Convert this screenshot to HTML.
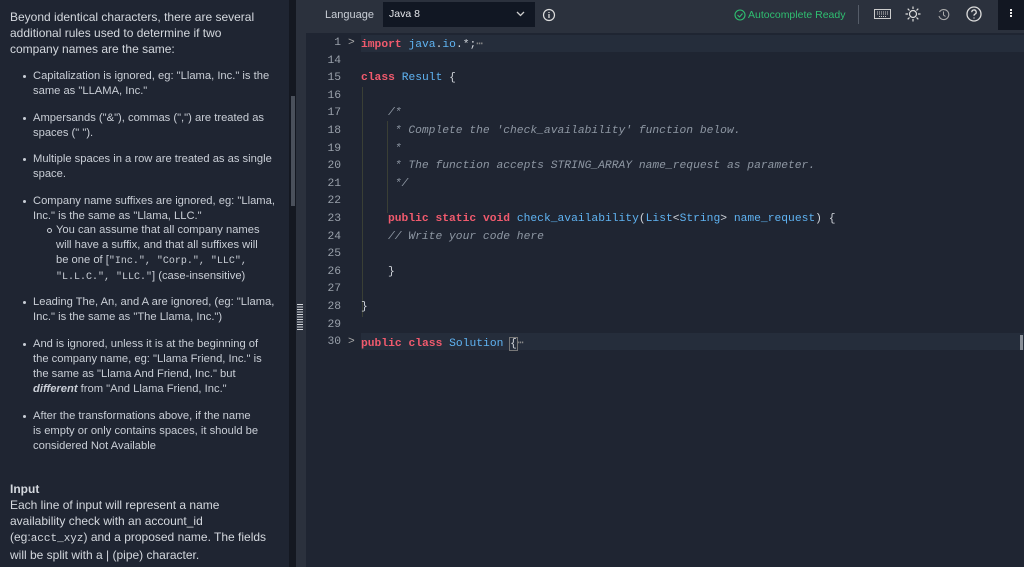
<!DOCTYPE html>
<html><head><meta charset="utf-8"><style>
*{margin:0;padding:0;box-sizing:border-box}
body{width:1024px;height:567px;overflow:hidden;background:#1e2531;font-family:"Liberation Sans",sans-serif;position:relative}
#left{position:absolute;left:0;top:0;width:289px;height:567px;background:#1f2532;color:#c9ced6;font-size:11.2px;overflow:hidden}
#left .p{position:absolute;left:10px;width:280px;font-size:12px;line-height:16px;color:#d4d8de;white-space:nowrap}
.li{position:absolute;left:33px;width:250px;line-height:15px;white-space:nowrap}
.li:before{content:"";position:absolute;left:-10px;top:6px;width:3px;height:3px;border-radius:50%;background:#c9ced6}
.sub{position:absolute;left:56px;width:225px;line-height:15px;white-space:nowrap}
.sub:before{content:"";position:absolute;left:-9px;top:5px;width:3px;height:3px;border-radius:50%;border:1px solid #c9ced6}
code{font-family:"Liberation Mono",monospace;font-size:10px}
#sb{position:absolute;left:289px;top:0;width:7px;height:567px;background:#141821}
#thumb{position:absolute;left:291px;top:96px;width:4px;height:110px;background:#4a505b}
#div{position:absolute;left:296px;top:0;width:10px;height:567px;background:#2b313d}
#grip{position:absolute;left:297px;top:304px;width:6px;height:26px;background:repeating-linear-gradient(#d6d9de 0 1px,transparent 1px 2.5px)}
#top{position:absolute;left:306px;top:0;width:718px;height:33px;background:#2b313d;color:#c9ced6;font-size:11px}
#sel{position:absolute;left:77px;top:2px;width:152px;height:25px;background:#111723;color:#e5e7eb;font-size:10.5px;line-height:25px;padding-left:6px}
#ed{position:absolute;left:306px;top:33px;width:718px;height:534px;background:#1f2532;font-family:"Liberation Mono",monospace;font-size:11.3px;color:#d0d4da}
.ln{position:absolute;left:0;width:35px;text-align:right;color:#9aa1ab}
.c{position:absolute;left:55px;white-space:pre}
.k{color:#f05a6d;font-weight:bold}.b{color:#5fb3f2}.cm{color:#8e97a3;font-style:italic}
.hl{position:absolute;left:55px;width:663px;height:17px;background:#252d3b}
</style></head><body>
<div id="left">
<div class="p" style="top:9px">Beyond identical characters, there are several<br>additional rules used to determine if two<br>company names are the same:</div>
<div class="li" style="top:69px">Capitalization is ignored, eg: "Llama, Inc." is the<br>same as "LLAMA, Inc."</div>
<div class="li" style="top:111px">Ampersands ("&amp;"), commas (",") are treated as<br>spaces (" ").</div>
<div class="li" style="top:152px">Multiple spaces in a row are treated as as single<br>space.</div>
<div class="li" style="top:194px">Company name suffixes are ignored, eg: "Llama,<br>Inc." is the same as "Llama, LLC."</div>
<div class="sub" style="top:223px">You can assume that all company names<br>will have a suffix, and that all suffixes will<br>be one of [<code>"Inc.", "Corp.", "LLC",</code><br><code>"L.L.C.", "LLC."</code>] (case-insensitive)</div>
<div class="li" style="top:295px">Leading The, An, and A are ignored, (eg: "Llama,<br>Inc." is the same as "The Llama, Inc.")</div>
<div class="li" style="top:337px">And is ignored, unless it is at the beginning of<br>the company name, eg: "Llama Friend, Inc." is<br>the same as "Llama And Friend, Inc." but<br><b><i>different</i></b> from "And Llama Friend, Inc."</div>
<div class="li" style="top:409px">After the transformations above, if the name<br>is empty or only contains spaces, it should be<br>considered Not Available</div>
<div class="p" style="top:481px"><b>Input</b><br>Each line of input will represent a name<br>availability check with an account_id<br>(eg:<code style="font-size:11px">acct_xyz</code>) and a proposed name. The fields<br>will be split with a | (pipe) character.</div>
</div>
<div id="sb"></div><div id="thumb"></div><div id="div"></div><div id="grip"></div>
<div id="top">
<span style="position:absolute;left:19px;top:9px">Language</span>
<div id="sel">Java 8<svg style="position:absolute;right:10px;top:9px" width="9" height="6"><path d="M1 1l3.5 3.5L8 1" stroke="#ccc" fill="none" stroke-width="1.3"/></svg></div>
<svg style="position:absolute;left:236px;top:8px" width="14" height="14"><circle cx="7" cy="7" r="5.5" stroke="#ddd" fill="none" stroke-width="1.2"/><path d="M7 6v4M7 4v1" stroke="#ddd" stroke-width="1.3"/></svg>
<svg style="position:absolute;left:428px;top:9px" width="12" height="12"><circle cx="6" cy="6" r="5" stroke="#2fbf71" fill="none" stroke-width="1.1"/><path d="M3.5 6l2 2 3-3.5" stroke="#2fbf71" fill="none" stroke-width="1.1"/></svg>
<span style="position:absolute;left:442px;top:9px;color:#2fbf71;font-size:10.5px">Autocomplete Ready</span>
<div style="position:absolute;left:552px;top:5px;width:1px;height:19px;background:#555c68"></div>
<svg style="position:absolute;left:568px;top:8px" width="18" height="12"><rect x="0.5" y="1.5" width="16" height="9" fill="none" stroke="#ccc"/><path d="M3 4h11M3 6h11M5 8.5h7" stroke="#ccc" stroke-dasharray="1 1"/></svg>
<svg style="position:absolute;left:599px;top:6px" width="16" height="16"><circle cx="8" cy="8" r="3.5" stroke="#ddd" fill="none" stroke-width="1.2"/><path d="M8 0.5v2.5M8 13v2.5M0.5 8h2.5M13 8h2.5M2.7 2.7l1.8 1.8M11.5 11.5l1.8 1.8M2.7 13.3l1.8-1.8M11.5 4.5l1.8-1.8" stroke="#ddd" stroke-width="1.2"/></svg>
<svg style="position:absolute;left:631px;top:8px" width="13" height="13"><path d="M2.5 4A5 5 0 1 1 2 8" stroke="#aaa" fill="none" stroke-width="1.1"/><path d="M6.5 3.5v3.5l2 1.5" stroke="#aaa" fill="none"/></svg>
<svg style="position:absolute;left:660px;top:6px" width="16" height="16"><circle cx="8" cy="8" r="7" stroke="#ddd" fill="none" stroke-width="1.3"/><path d="M5.8 6.2a2.2 2.2 0 1 1 3 2c-.7.3-.8.7-.8 1.5M8 11.5v1" stroke="#ddd" fill="none" stroke-width="1.3"/></svg>
<div style="position:absolute;left:692px;top:0;width:26px;height:30px;background:#121722"><div style="position:absolute;left:12px;top:9px;width:2px;height:2px;background:#eee;box-shadow:0 3px #eee,0 6px #eee"></div></div>
</div>
<div id="ed">
<div class="hl" style="top:2px"></div><div class="hl" style="top:300px"></div>
<div style="position:absolute;left:56px;top:54px;width:1px;height:230px;background:#3a3f35"></div>
<div style="position:absolute;left:81px;top:88px;width:1px;height:92px;background:#3a3f35"></div>
<div style="position:absolute;left:714px;top:302px;width:3px;height:15px;background:#8a9099"></div>
<div class="ln" style="top:4px">1</div><div class="c" style="left:42px;top:4px;color:#aaa">&gt;</div><div class="c" style="top:4px"><span class="k">import</span> <span class="b">java</span>.<span class="b">io</span>.*;<span style="color:#888">⋯</span></div>
<div class="ln" style="top:22px">14</div>
<div class="ln" style="top:39px">15</div><div class="c" style="top:39px"><span class="k">class</span> <span class="b">Result</span> {</div>
<div class="ln" style="top:57px">16</div>
<div class="ln" style="top:74px">17</div><div class="c cm" style="left:82px;top:74px">/*</div>
<div class="ln" style="top:92px">18</div><div class="c cm" style="left:82px;top:92px"> * Complete the 'check_availability' function below.</div>
<div class="ln" style="top:110px">19</div><div class="c cm" style="left:82px;top:110px"> *</div>
<div class="ln" style="top:127px">20</div><div class="c cm" style="left:82px;top:127px"> * The function accepts STRING_ARRAY name_request as parameter.</div>
<div class="ln" style="top:145px">21</div><div class="c cm" style="left:82px;top:145px"> */</div>
<div class="ln" style="top:162px">22</div>
<div class="ln" style="top:180px">23</div><div class="c" style="left:82px;top:180px"><span class="k">public</span> <span class="k">static</span> <span class="k">void</span> <span class="b">check_availability</span>(<span class="b">List</span>&lt;<span class="b">String</span>&gt; <span class="b">name_request</span>) {</div>
<div class="ln" style="top:198px">24</div><div class="c cm" style="left:82px;top:198px">// Write your code here</div>
<div class="ln" style="top:215px">25</div>
<div class="ln" style="top:233px">26</div><div class="c" style="left:82px;top:233px">}</div>
<div class="ln" style="top:250px">27</div>
<div class="ln" style="top:268px">28</div><div class="c" style="top:268px">}</div>
<div class="ln" style="top:286px">29</div>
<div class="ln" style="top:303px">30</div><div class="c" style="left:42px;top:303px;color:#aaa">&gt;</div><div class="c" style="top:303px"><span class="k">public</span> <span class="k">class</span> <span class="b">Solution</span> <span style="outline:1px solid #777">{</span><span style="color:#888">⋯</span></div>
</div>
</body></html>
